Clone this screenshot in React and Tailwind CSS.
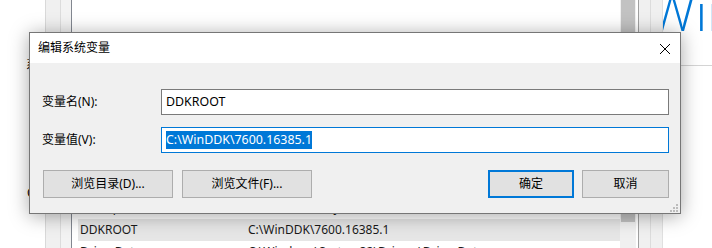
import React from 'react';

const font = { fontFamily: '"Noto Sans", "Noto Sans CJK SC", sans-serif' };

// Rows of the variables list behind the dialog
const rows = [
  { name: 'ComSpec', value: 'C:\\WINDOWS\\system32\\cmd.exe' },
  { name: 'DDKROOT', value: 'C:\\WinDDK\\7600.16385.1', selected: true },
  { name: 'DriverData', value: 'C:\\Windows\\System32\\Drivers\\DriverData' },
];

function Button({ children, width, primary }) {
  return (
    <button
      type="button"
      className={`h-[28px] ${width} bg-[#e1e1e1] text-[12px] text-black flex items-center justify-center ${
        primary ? 'border-2 border-[#0078d7]' : 'border border-[#adadad]'
      }`}
    >
      {children}
    </button>
  );
}

function Dialog() {
  return (
    <div className="absolute left-[29px] top-[32px] w-[652px] h-[182px] border border-[#767676] bg-[#f0f0f0] flex flex-col shadow-[0_2px_18px_rgba(0,0,0,0.35)]">
      {/* Title bar */}
      <div className="h-[30px] bg-white flex items-center justify-between pl-[8px] pr-[9px]">
        <span className="text-[12px] text-black">编辑系统变量</span>
        <svg width="12" height="12" viewBox="0 0 12 12" className="mt-[1px]">
          <path d="M1 1 L11 11 M11 1 L1 11" stroke="#000" strokeWidth="1" />
        </svg>
      </div>

      {/* Body */}
      <div className="flex-1 flex flex-col pt-[26px] pl-[12px] pr-[11px]">
        <div className="flex items-center h-[26px]">
          <span className="w-[119px] text-[12px] text-black">变量名(N):</span>
          <div className="flex-1 h-[26px] bg-white border border-[#7a7a7a] flex items-center pl-[4px] text-[12.4px] text-black">
            DDKROOT
          </div>
        </div>
        <div className="flex items-center h-[26px] mt-[12px]">
          <span className="w-[119px] text-[12px] text-black">变量值(V):</span>
          <div className="flex-1 h-[26px] bg-white border border-[#0078d7] flex items-center pl-[4px] text-[12.4px]">
            <span className="bg-[#0078d7] text-white h-[18px] leading-[18px]">C:\WinDDK\7600.16385.1</span>
          </div>
        </div>
        <div className="flex items-center mt-[17px] ml-px">
          <Button width="w-[130px]">浏览目录(D)...</Button>
          <div className="ml-[9px]">
            <Button width="w-[130px]">浏览文件(F)...</Button>
          </div>
          <div className="flex-1" />
          <Button width="w-[86px]" primary>确定</Button>
          <div className="ml-[8px]">
            <Button width="w-[87px]">取消</Button>
          </div>
        </div>
      </div>

      {/* Resize grip */}
      <svg width="8" height="8" viewBox="0 0 8 8" className="absolute right-[2px] bottom-[1px]">
        {[[6, 0], [3, 3], [6, 3], [0, 6], [3, 6], [6, 6]].map(([x, y]) => (
          <rect key={`${x}-${y}`} x={x} y={y} width="2" height="2" fill="#bcbcbc" />
        ))}
      </svg>
    </div>
  );
}

export default function App() {
  return (
    <div className="relative w-[712px] h-[248px] bg-white overflow-hidden" style={font}>
      <div className="flex h-full">
        {/* Window further behind, left */}
        <div className="w-[45px] shrink-0 relative">
          <span className="absolute left-[26px] top-[56px] text-[12px] text-black">系</span>
          <span className="absolute left-[27px] top-[184px] text-[12px] text-black">C</span>
        </div>

        {/* Left frame of the environment variables window */}
        <div className="w-[27px] shrink-0 flex border-l border-[#d9d9d9]">
          <div className="w-[15px] bg-[#f0f0f0] border-r border-[#dcdcdc]" />
          <div className="flex-1 bg-[#f3f3f3] border-r border-[#828790]" />
        </div>

        {/* List area */}
        <div className="w-[566px] shrink-0 flex bg-white">
          <div className="flex-1 min-w-0 overflow-hidden flex flex-col pt-[197px] pl-[6px]">
            {rows.map((r) => (
              <div
                key={r.name}
                className={`h-[22px] shrink-0 flex items-center text-[12px] text-[#1a1a1a] ${
                  r.selected ? 'bg-[#e6e6e6]' : ''
                }`}
              >
                <span className="w-[170px] shrink-0 pl-[2px]">{r.name}</span>
                <span className="whitespace-nowrap">{r.value}</span>
              </div>
            ))}
          </div>
          <div className="w-[16px] bg-[#f0f0f0] flex flex-col">
            <div className="h-[222px] mx-px bg-[#c2c2c2]" />
          </div>
          <div className="w-[2px] bg-white" />
        </div>

        {/* Right frame */}
        <div className="w-[25px] shrink-0 flex border-l border-[#a0a0a0]">
          <div className="w-[12px] bg-[#f0f0f0] border-r border-[#dcdcdc]" />
          <div className="flex-1 bg-[#f0f0f0] border-r border-[#e0e0e0]" />
        </div>

        {/* System window behind, with the Windows logo text */}
        <div className="flex-1 min-w-0">
          <div className="h-[66px] border-b border-[#d4d4d4] overflow-hidden">
            <div
              className="text-[52px] leading-none font-light text-[#0078d7] whitespace-nowrap mt-[-15px] ml-[-14px]"
              style={{ fontFamily: '"Open Sans", sans-serif' }}
            >
              Windows
            </div>
          </div>
        </div>
      </div>

      <Dialog />
    </div>
  );
}
